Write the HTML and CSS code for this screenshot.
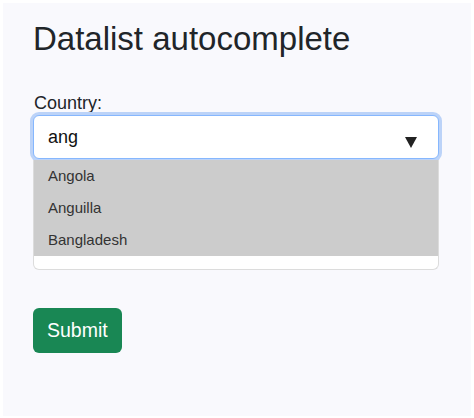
FILE: index.html
```html
<!DOCTYPE html>
<html lang="en">
<head>
<meta charset="utf-8">
<title>Datalist autocomplete</title>
<link rel="stylesheet" href="styles.css">
</head>
<body>
<main class="page">
  <h1 class="title">Datalist autocomplete</h1>
  <form class="form">
    <label class="label" for="country">Country:</label>
    <div class="combo">
      <div class="field">
        <input class="input" id="country" type="text" value="ang" autocomplete="off">
        <span class="caret" aria-hidden="true"></span>
      </div>
      <ul class="list">
        <li class="option">Angola</li>
        <li class="option">Anguilla</li>
        <li class="option">Bangladesh</li>
      </ul>
    </div>
    <button class="submit" type="button">Submit</button>
  </form>
</main>
</body>
</html>
```
FILE: styles.css
```css
html, body {
  margin: 0;
  padding: 0;
  background: #ffffff;
}

body {
  font-family: "Liberation Sans", Arial, sans-serif;
  color: #212529;
}

.page {
  margin: 3px 3px 2px 3px;
  height: 413px;
  box-sizing: border-box;
  padding: 17px 30px 0 30px;
  background: #f9f9fd;
}

.title {
  margin: 0;
  font-size: 33px;
  font-weight: 400;
  line-height: 38px;
}

.form {
  margin-top: 35px;
  display: flex;
  flex-direction: column;
  align-items: flex-start;
}

.label {
  font-size: 18px;
  line-height: 21px;
  margin-left: 1px;
}

.combo {
  position: relative;
  margin-top: 1px;
  width: 406px;
}

.field {
  position: relative;
}

.input {
  display: block;
  box-sizing: border-box;
  width: 406px;
  height: 44px;
  margin: 0;
  padding: 0 40px 0 14px;
  font-family: "Liberation Sans", Arial, sans-serif;
  font-size: 18px;
  color: #111;
  background: #ffffff;
  border: 1px solid #86b7fe;
  border-radius: 6px;
  box-shadow: 0 0 0 3px #bcd3f8;
  outline: none;
}

.caret {
  position: absolute;
  right: 22px;
  top: 22px;
  width: 0;
  height: 0;
  border-left: 6px solid transparent;
  border-right: 6px solid transparent;
  border-top: 11px solid #222;
}

.list {
  position: absolute;
  z-index: 2;
  top: 45px;
  left: 0;
  right: 0;
  margin: 0;
  padding: 0 0 13px 0;
  list-style: none;
  background: #ffffff;
  border: 1px solid #dcdcdc;
  border-top: none;
  border-radius: 0 0 6px 6px;
}

.option {
  height: 32px;
  line-height: 32px;
  padding-left: 14px;
  font-size: 15px;
  color: #333;
  background: #cccccc;
}

.submit {
  margin-top: 149px;
  height: 45px;
  padding: 0 14px;
  font-family: "Liberation Sans", Arial, sans-serif;
  font-size: 19.5px;
  color: #ffffff;
  background: #198754;
  border: none;
  border-radius: 6px;
}
```
